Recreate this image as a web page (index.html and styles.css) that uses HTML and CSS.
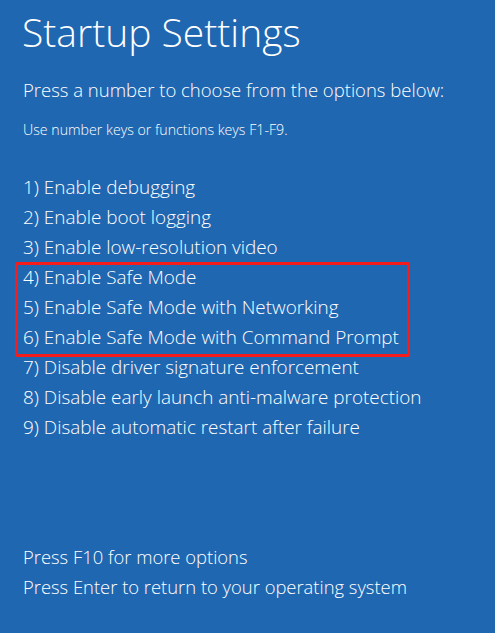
FILE: index.html
```html
<!DOCTYPE html>
<html lang="en">
<head>
    <meta charset="UTF-8">
    <title>Startup Settings</title>
    <link rel="stylesheet" href="styles.css">
</head>
<body>
    <div class="screen">
        <h1>Startup Settings</h1>
        <p class="lead">Press a number to choose from the options below:</p>
        <p class="hint">Use number keys or functions keys F1-F9.</p>

        <div class="options">
            <div class="option">1) Enable debugging</div>
            <div class="option">2) Enable boot logging</div>
            <div class="option">3) Enable low-resolution video</div>
            <div class="highlight">
                <div class="option">4) Enable Safe Mode</div>
                <div class="option">5) Enable Safe Mode with Networking</div>
                <div class="option">6) Enable Safe Mode with Command Prompt</div>
            </div>
            <div class="option">7) Disable driver signature enforcement</div>
            <div class="option">8) Disable early launch anti-malware protection</div>
            <div class="option">9) Disable automatic restart after failure</div>
        </div>

        <div class="footer">
            <div class="option">Press F10 for more options</div>
            <div class="option">Press Enter to return to your operating system</div>
        </div>
    </div>
</body>
</html>
```

FILE: styles.css
```css
html, body {
    margin: 0;
    height: 100%;
}

body {
    background: #2067b2;
    color: #fff;
    font-family: 'Open Sans', 'Noto Sans', sans-serif;
}

.screen {
    padding: 10px 0 0 23px;
}

h1 {
    margin: 0 0 0 -1px;
    font-size: 39px;
    font-weight: 300;
    line-height: 44px;
}

.lead {
    margin: 21px 0 0;
    font-size: 18.5px;
    font-weight: 300;
    line-height: 30px;
}

.hint {
    margin: 15px 0 0;
    font-size: 14.2px;
    font-weight: 300;
    line-height: 20px;
}

.options {
    margin-top: 32px;
}

.option {
    font-size: 18.9px;
    font-weight: 300;
    line-height: 30px;
    white-space: nowrap;
}

.highlight {
    position: relative;
}

.highlight::after {
    content: "";
    position: absolute;
    left: -8px;
    top: 0;
    width: 395px;
    height: 95px;
    box-sizing: border-box;
    border: 3px solid #f71c1c;
    border-radius: 2px;
}

.footer {
    margin-top: 100px;
}

.footer .option {
    font-size: 18.4px;
}
```
